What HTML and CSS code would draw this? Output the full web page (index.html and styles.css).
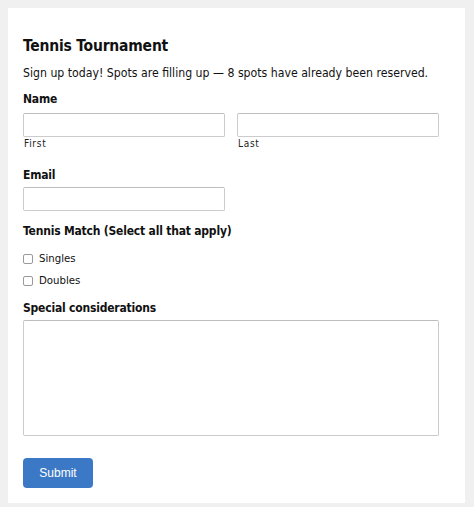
FILE: index.html
```html
<!DOCTYPE html>
<html>
<head>
<meta charset="utf-8">
<link rel="stylesheet" href="styles.css">
</head>
<body>
<form class="card">
  <h1 class="title">Tennis Tournament</h1>
  <p class="intro">Sign up today! Spots are filling up — 8 spots have already been reserved.</p>

  <div class="label label-name">Name</div>
  <div class="name-row">
    <div class="name-col">
      <input class="field" type="text">
      <span class="sublabel">First</span>
    </div>
    <div class="name-col">
      <input class="field" type="text">
      <span class="sublabel">Last</span>
    </div>
  </div>

  <div class="label label-email">Email</div>
  <input class="field field-email" type="text">

  <div class="label label-match">Tennis Match (Select all that apply)</div>
  <label class="check check-first"><input type="checkbox" class="box"><span>Singles</span></label>
  <label class="check"><input type="checkbox" class="box"><span>Doubles</span></label>

  <div class="label label-special">Special considerations</div>
  <textarea class="area"></textarea>

  <button type="button" class="submit">Submit</button>
</form>
</body>
</html>
```

FILE: styles.css
```css
html, body {
  margin: 0;
  padding: 0;
}
body {
  background: #f0f0f0;
  font-family: "DejaVu Sans Condensed", "DejaVu Sans", sans-serif;
  color: #111;
}
.card {
  display: flex;
  flex-direction: column;
  align-items: flex-start;
  margin: 8px 9px 0 8px;
  height: 495px;
  box-sizing: border-box;
  padding: 28px 15px 0 15px;
  background: #fff;
}
.title {
  margin: 0;
  font-size: 15.5px;
  line-height: 20px;
  letter-spacing: -0.2px;
  font-weight: bold;
}
.intro {
  margin: 9px 0 0 0;
  font-size: 12.2px;
  line-height: 16px;
}
.label {
  font-size: 12px;
  line-height: 16px;
  letter-spacing: -0.2px;
  font-weight: bold;
}
.label-name { margin-top: 10px; }
.name-row {
  display: flex;
  gap: 12px;
  margin-top: 6px;
}
.name-col {
  display: flex;
  flex-direction: column;
}
.field {
  width: 202px;
  height: 24px;
  box-sizing: border-box;
  margin: 0;
  border: 1px solid #cbcbcb;
  border-top-color: #bdbdbd;
  border-radius: 2px;
  background: #fff;
}
.sublabel {
  font-size: 10px;
  line-height: 13px;
  letter-spacing: 0.7px;
  margin-left: 1px;
  color: #222;
}
.label-email { margin-top: 17px; }
.field-email { margin-top: 4px; }
.label-match { margin-top: 12px; }
.check {
  display: flex;
  align-items: center;
  gap: 6px;
  font-size: 11.3px;
  line-height: 16px;
  margin-top: 6px;
}
.check-first { margin-top: 12px; }
.box {
  appearance: none;
  -webkit-appearance: none;
  width: 10px;
  height: 10px;
  margin: 0;
  border: 1px solid #9a9a9a;
  border-radius: 2px;
  background: #fff;
}
.label-special { margin-top: 11px; }
.area {
  margin-top: 4px;
  width: 416px;
  height: 116px;
  box-sizing: border-box;
  border: 1px solid #cbcbcb;
  border-top-color: #bdbdbd;
  border-radius: 2px;
  resize: none;
}
.submit {
  margin-top: 22px;
  width: 70px;
  height: 30px;
  border: none;
  border-radius: 4px;
  background: #3b79c6;
  color: #fff;
  font-family: "Liberation Sans", Arial, sans-serif;
  font-size: 12px;
  padding: 0;
}
```
